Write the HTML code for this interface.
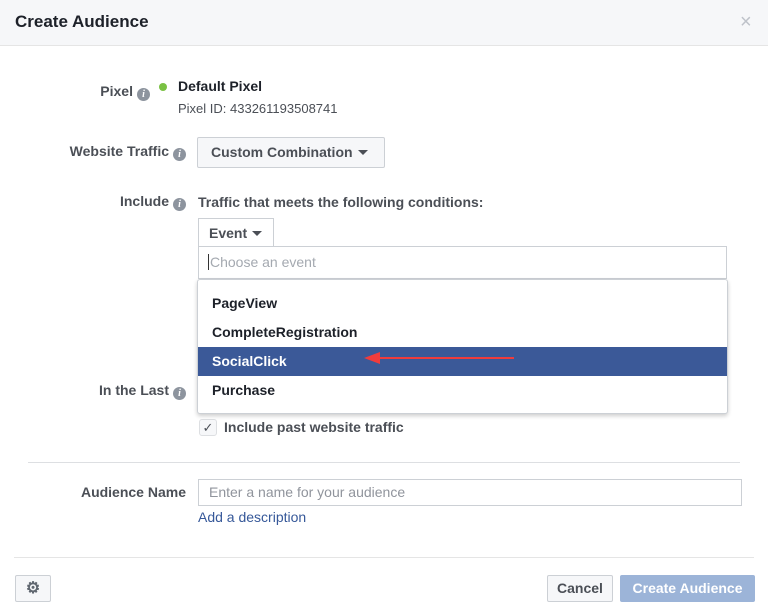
<!DOCTYPE html>
<html><head><meta charset="utf-8"><style>
*{box-sizing:border-box;margin:0;padding:0}
body{width:768px;height:615px;background:#fff;font-family:"Liberation Sans",Arial,sans-serif;position:relative;overflow:hidden;color:#1d2129}
.a{position:absolute;white-space:nowrap}
.lbl{font-size:14px;font-weight:bold;color:#4b4f56;text-align:right}
.info{display:inline-block;width:13px;height:13px;border-radius:50%;background:#8d949e;color:#fff;font-size:10px;font-style:italic;font-family:"Liberation Serif",serif;text-align:center;line-height:13px;vertical-align:-1px;margin-left:4px;font-weight:bold}
.btn{border:1px solid #ccd0d5;border-radius:2px;background:#f6f7f9;font-weight:bold;font-size:14px;color:#4b4f56}
.caret{display:inline-block;width:0;height:0;border-left:5px solid transparent;border-right:5px solid transparent;border-top:5px solid #4b4f56;vertical-align:2px;margin-left:5px}
.item{position:absolute;left:0;width:100%;height:29px;line-height:29px;padding-left:14px;font-weight:bold;font-size:14px}
</style></head><body>
<div class="a" style="left:0;top:0;width:768px;height:46px;background:#f6f7f9;border-bottom:1px solid #e5e5e5"></div>
<div class="a" style="left:15px;top:12px;font-size:17px;font-weight:bold">Create Audience</div>
<div class="a" style="left:740px;top:11px;font-size:20px;color:#bec2c9">×</div>

<div class="a lbl" style="right:618px;top:83px">Pixel<span class="info">i</span></div>
<div class="a" style="left:159px;top:83px;width:8px;height:8px;border-radius:50%;background:#7ac143"></div>
<div class="a" style="left:178px;top:78px;font-size:14px;font-weight:bold">Default Pixel</div>
<div class="a" style="left:178px;top:101px;font-size:13px;color:#4b4f56">Pixel ID: 433261193508741</div>

<div class="a lbl" style="right:582px;top:143px">Website Traffic<span class="info">i</span></div>
<div class="a btn" style="left:197px;top:137px;width:188px;height:31px;line-height:29px;padding-left:13px">Custom Combination<span class="caret"></span></div>

<div class="a lbl" style="right:582px;top:193px">Include<span class="info">i</span></div>
<div class="a" style="left:198px;top:194px;font-size:14px;font-weight:bold;color:#4b4f56">Traffic that meets the following conditions:</div>
<div class="a" style="left:198px;top:218px;width:76px;height:29px;border:1px solid #ccd0d5;border-bottom:none;background:#fff;font-weight:bold;font-size:14px;color:#4b4f56;line-height:28px;padding-left:10px">Event<span class="caret"></span></div>
<div class="a" style="left:198px;top:246px;width:529px;height:33px;border:1px solid #ccd0d5;background:#fff;font-size:14px;color:#a4a9b0;line-height:31px;padding-left:9px"><span style="border-left:1px solid #333;padding-left:1px">Choose an event</span></div>

<div class="a lbl" style="right:582px;top:382px">In the Last<span class="info">i</span></div>
<div class="a" style="left:199px;top:419px;width:18px;height:17px;border:1px solid #dddfe2;border-radius:3px;background:#f6f7f9;font-size:13px;color:#4b4f56;text-align:center;line-height:15px">✓</div>
<div class="a" style="left:224px;top:419px;font-size:14px;font-weight:bold;color:#4b4f56">Include past website traffic</div>

<div class="a" style="left:197px;top:279px;width:531px;height:135px;background:#fff;border:1px solid #ccd0d5;border-radius:3px;box-shadow:0 2px 4px rgba(0,0,0,.2)">
<div class="item" style="top:9px">PageView</div>
<div class="item" style="top:38px">CompleteRegistration</div>
<div class="item" style="top:67px;background:#3b5998;color:#fff">SocialClick</div>
<div class="item" style="top:96px">Purchase</div>
</div>
<svg class="a" style="left:362px;top:351px" width="156" height="14"><line x1="14" y1="7" x2="152" y2="7" stroke="#f03c3c" stroke-width="2"/><polygon points="2,7 18,1 18,13" fill="#f03c3c"/></svg>

<div class="a" style="left:28px;top:462px;width:712px;height:1px;background:#dddfe2"></div>
<div class="a lbl" style="right:582px;top:484px">Audience Name</div>
<div class="a" style="left:198px;top:479px;width:544px;height:27px;border:1px solid #ccd0d5;font-size:14px;color:#90949c;line-height:25px;padding-left:10px">Enter a name for your audience</div>
<div class="a" style="left:198px;top:509px;font-size:14px;color:#365899">Add a description</div>

<div class="a" style="left:14px;top:557px;width:740px;height:1px;background:#e5e5e5"></div>
<div class="a btn" style="left:15px;top:575px;width:36px;height:27px;text-align:center;line-height:25px;font-size:16px;color:#606770">⚙</div>
<div class="a btn" style="left:547px;top:575px;width:66px;height:27px;text-align:center;line-height:25px">Cancel</div>
<div class="a" style="left:620px;top:575px;width:135px;height:27px;background:#9cb4d8;border-radius:2px;color:#fff;font-weight:bold;font-size:14px;text-align:center;line-height:27px">Create Audience</div>
</body></html>
